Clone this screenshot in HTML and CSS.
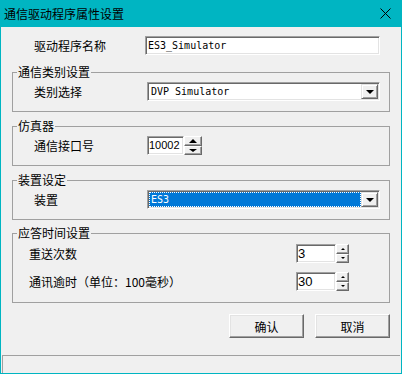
FILE: index.html
```html
<!DOCTYPE html>
<html lang="zh-CN">
<head>
<meta charset="UTF-8">
<meta name="viewport" content="width=device-width, initial-scale=1.0">
<title>通信驱动程序属性设置</title>
<link rel="stylesheet" href="styles.css">
</head>
<body>

<div class="window">
    <div class="titlebar">
        <span class="title">通信驱动程序属性设置</span>
        <span class="close">
            <svg width="11" height="11" viewBox="0 0 11 11"><path d="M0.5 0.5 L10.5 10.5 M10.5 0.5 L0.5 10.5" stroke="#000" stroke-width="1" fill="none"/></svg>
        </span>
    </div>

    <div class="content">
        <div class="row name-row">
            <span class="label">驱动程序名称</span>
            <div class="edit name-edit">ES3_Simulator</div>
        </div>

        <fieldset class="group">
            <legend>通信类别设置</legend>
            <div class="row">
                <span class="label">类别选择</span>
                <div class="combo">
                    <span class="combo-value">DVP Simulator</span>
                    <span class="combo-btn"><span class="arrow-down"></span></span>
                </div>
            </div>
        </fieldset>

        <fieldset class="group">
            <legend>仿真器</legend>
            <div class="row">
                <span class="label">通信接口号</span>
                <div class="spin">
                    <div class="spin-field">10002</div>
                    <div class="spin-btns">
                        <span class="spin-btn"><span class="arrow-up"></span></span>
                        <span class="spin-btn"><span class="arrow-down small"></span></span>
                    </div>
                </div>
            </div>
        </fieldset>

        <fieldset class="group">
            <legend>装置设定</legend>
            <div class="row">
                <span class="label">装置</span>
                <div class="combo">
                    <span class="combo-value selected"><span class="focus">ES3</span></span>
                    <span class="combo-btn"><span class="arrow-down"></span></span>
                </div>
            </div>
        </fieldset>

        <fieldset class="group last">
            <legend>应答时间设置</legend>
            <div class="row">
                <span class="label wide">重送次数</span>
                <div class="spin narrow">
                    <div class="spin-field">3</div>
                    <div class="spin-btns">
                        <span class="spin-btn"><span class="arrow-up tiny"></span></span>
                        <span class="spin-btn"><span class="arrow-down tiny"></span></span>
                    </div>
                </div>
            </div>
            <div class="row second">
                <span class="label wide">通讯逾时（单位：100毫秒）</span>
                <div class="spin narrow">
                    <div class="spin-field">30</div>
                    <div class="spin-btns">
                        <span class="spin-btn"><span class="arrow-up tiny"></span></span>
                        <span class="spin-btn"><span class="arrow-down tiny"></span></span>
                    </div>
                </div>
            </div>
        </fieldset>

        <div class="buttons">
            <button type="button" class="btn">确认</button>
            <button type="button" class="btn">取消</button>
        </div>
    </div>

    <div class="statusbar"></div>
</div>

</body>
</html>
```

FILE: styles.css
```css
body {
    margin: 0;
    padding: 0;
    font-family: "Noto Sans CJK SC", "Liberation Sans", sans-serif;
    font-size: 12px;
    color: #000;
}

.window {
    width: 402px;
    height: 374px;
    box-sizing: border-box;
    border: 1px solid #00b5c2;
    border-top: none;
    background-color: #f0f0f0;
    display: flex;
    flex-direction: column;
}

.titlebar {
    height: 27px;
    margin: 0 -1px;
    background-color: #00b5c2;
    display: flex;
    align-items: center;
    justify-content: space-between;
}

.title {
    padding-left: 4px;
    font-size: 12px;
    line-height: 14px;
}

.close {
    width: 11px;
    height: 11px;
    margin-right: 11px;
    display: flex;
}

.content {
    padding: 0 11px;
    flex: 1;
}

.row {
    display: flex;
    align-items: center;
    height: 19px;
    margin-left: 17px;
}

.name-row {
    margin-top: 9px;
    margin-left: 22px;
}

.label {
    width: 113px;
    line-height: 14px;
    white-space: nowrap;
}

.name-row .label {
    width: 111px;
}

.group.last .row {
    margin-left: 12px;
}

.label.wide {
    width: 267px;
}

/* sunken control frame */
.edit,
.combo,
.spin-field {
    box-sizing: border-box;
    height: 19px;
    background-color: #fff;
    border-top: 1px solid #a0a0a0;
    border-left: 1px solid #a0a0a0;
    border-right: 1px solid #fff;
    border-bottom: 1px solid #fff;
    box-shadow: inset 1px 1px 0 #696969, inset -1px -1px 0 #e3e3e3;
}

.edit {
    width: 235px;
    padding-left: 2px;
    font-family: "DejaVu Sans Mono", monospace;
    font-size: 10px;
    line-height: 17px;
}

.group {
    margin: 7px 0 0 0;
    padding: 3px 4px 10px 4px;
    border: 1px solid #a0a0a0;
    min-width: 0;
}

.group:first-of-type {
    margin-top: 10px;
}

.group legend {
    padding: 0 1px;
    line-height: 14px;
}

.group.last {
    margin-top: 6px;
    padding-top: 4px;
    padding-bottom: 11px;
}

.row.second {
    margin-top: 9px;
}

.combo {
    width: 233px;
    display: flex;
    align-items: center;
    padding: 1px;
}

.combo-value {
    flex: 1;
    height: 15px;
    padding-left: 2px;
    font-family: "DejaVu Sans Mono", monospace;
    font-size: 10px;
    line-height: 15px;
}

.combo-value.selected {
    background-color: #0078d7;
    color: #fff;
    padding-left: 0;
}

.focus {
    display: block;
    height: 13px;
    line-height: 13px;
    padding-left: 1px;
    outline: 1px dotted #fff;
    outline-offset: -1px;
    border: 1px solid transparent;
}

.combo-btn {
    width: 17px;
    height: 15px;
    box-sizing: border-box;
    background-color: #f0f0f0;
    border-top: 1px solid #e3e3e3;
    border-left: 1px solid #e3e3e3;
    border-right: 1px solid #696969;
    border-bottom: 1px solid #696969;
    box-shadow: inset 1px 1px 0 #fff, inset -1px -1px 0 #a0a0a0;
    display: flex;
    align-items: center;
    justify-content: center;
}

.arrow-down {
    width: 0;
    height: 0;
    border-left: 4px solid transparent;
    border-right: 4px solid transparent;
    border-top: 4px solid #000;
}

.arrow-up {
    width: 0;
    height: 0;
    border-left: 4px solid transparent;
    border-right: 4px solid transparent;
    border-bottom: 4px solid #000;
}

.arrow-down.small {
    border-top-width: 3px;
}

.arrow-up.tiny,
.arrow-down.tiny {
    border-left-width: 2px;
    border-right-width: 2px;
    border-top-width: 2px;
    border-bottom-width: 2px;
}

.arrow-up.tiny {
    border-top: none;
}

.arrow-down.tiny {
    border-bottom: none;
}

.spin {
    display: flex;
    height: 19px;
}

.spin-field {
    width: 37px;
    font-family: "Liberation Sans", sans-serif;
    font-size: 11px;
    line-height: 17px;
    padding-left: 1px;
    overflow: hidden;
}

.spin-btns {
    width: 18px;
    display: flex;
    flex-direction: column;
}

.spin.narrow .spin-field {
    width: 40px;
    font-size: 13px;
    padding-left: 1px;
}

.spin.narrow .spin-btns {
    width: 13px;
}

.spin-btn {
    flex: 1;
    box-sizing: border-box;
    background-color: #f0f0f0;
    border-top: 1px solid #fff;
    border-left: 1px solid #fff;
    border-right: 1px solid #696969;
    border-bottom: 1px solid #696969;
    box-shadow: inset -1px -1px 0 #a0a0a0;
    display: flex;
    align-items: center;
    justify-content: center;
}

.buttons {
    display: flex;
    justify-content: flex-end;
    gap: 11px;
    margin-top: 11px;
}

.btn {
    width: 75px;
    height: 24px;
    padding: 0;
    font-family: "Noto Sans CJK SC", sans-serif;
    font-size: 12px;
    background-color: #f0f0f0;
    border-top: 1px solid #fff;
    border-left: 1px solid #fff;
    border-right: 1px solid #696969;
    border-bottom: 1px solid #696969;
    box-shadow: inset -1px -1px 0 #a0a0a0, inset 1px 1px 0 #e3e3e3;
    color: #000;
}

.statusbar {
    height: 18px;
    box-sizing: border-box;
    margin: 0 1px;
    border-top: 1px solid #a0a0a0;
    border-left: 1px solid #a0a0a0;
}
```
